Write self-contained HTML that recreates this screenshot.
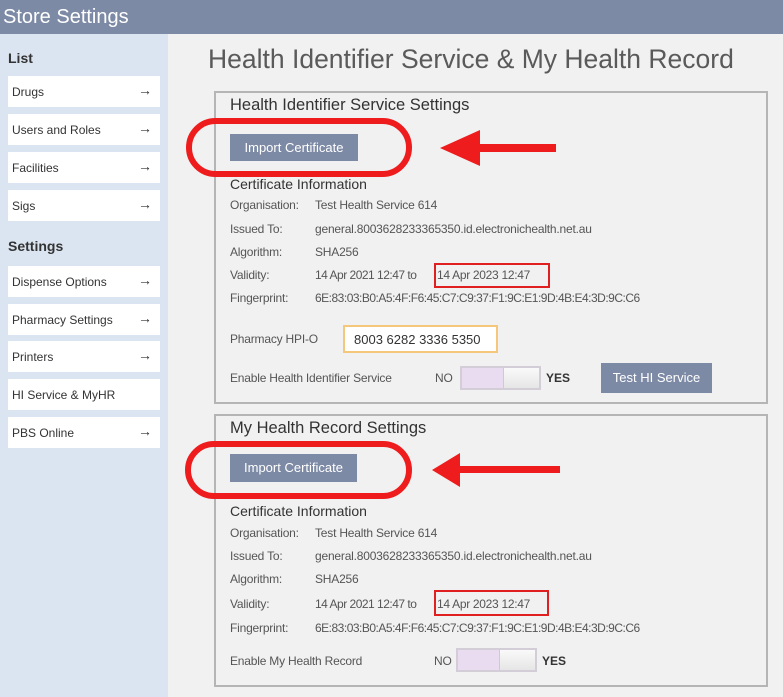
<!DOCTYPE html>
<html><head><style>
*{margin:0;padding:0;box-sizing:border-box}
body{width:783px;height:697px;overflow:hidden;background:#f1f1f1;font-family:"Liberation Sans",sans-serif;position:relative;color:#444}
.a{position:absolute;white-space:nowrap}
.tb{left:0;top:0;width:783px;height:34px;background:#7d8aa5;color:#fff;font-size:20px;padding:6px 0 0 3px}
.sb{left:0;top:34px;width:168px;height:663px;background:#dbe5f1}
.it{position:absolute;left:8px;width:152px;height:31px;background:#fff;font-size:12px;color:#333;padding:9px 0 0 4px}
.it span{position:absolute;right:8px;top:6px;font-size:14px}
.sh{font-size:14px;font-weight:bold;color:#333;left:8px}
.box{border:2px solid #b5b5b5;left:214px;width:554px}
.h2{font-size:16.5px;color:#333}
.h3{font-size:14px;color:#333}
.l{font-size:12px;color:#555;letter-spacing:-0.2px}
.btn{background:#7d8aa5;color:#fff;font-size:13px;text-align:center}
.ell{border:6px solid #ee1c1c;border-radius:30px}
.rb{border:2px solid #e02020}
.tg{background:#eadcf0;border:2px solid #d3cdd8}
.tg i{position:absolute;right:0;top:0;bottom:0;width:36px;background:linear-gradient(#fafafa,#e6e6e6);border-left:1px solid #ccc}
</style></head><body>
<div class="a tb">Store Settings</div>
<div class="a sb"></div>
<div class="a sh" style="top:50px">List</div>
<div class="it" style="top:76px">Drugs<span>→</span></div>
<div class="it" style="top:114px">Users and Roles<span>→</span></div>
<div class="it" style="top:152px">Facilities<span>→</span></div>
<div class="it" style="top:190px">Sigs<span>→</span></div>
<div class="a sh" style="top:238px">Settings</div>
<div class="it" style="top:266px">Dispense Options<span>→</span></div>
<div class="it" style="top:304px">Pharmacy Settings<span>→</span></div>
<div class="it" style="top:341px">Printers<span>→</span></div>
<div class="it" style="top:379px">HI Service &amp; MyHR</div>
<div class="it" style="top:417px">PBS Online<span>→</span></div>

<div class="a" style="left:208px;top:44px;font-size:26.5px;color:#5a5a5a">Health Identifier Service &amp; My Health Record</div>

<div class="a box" style="top:91px;height:313px"></div>
<div class="a h2" style="left:230px;top:96px">Health Identifier Service Settings</div>
<div class="a btn" style="left:230px;top:134px;width:128px;height:27px;line-height:27px">Import Certificate</div>
<div class="a ell" style="left:186px;top:118px;width:226px;height:59px"></div>
<svg class="a" style="left:438px;top:128px" width="120" height="40"><polygon points="2,20 42,2 42,16 118,16 118,24 42,24 42,38" fill="#ee1c1c"/></svg>
<div class="a h3" style="left:230px;top:176px">Certificate Information</div>
<div class="a l" style="left:230px;top:198px">Organisation:</div><div class="a l" style="left:315px;top:198px">Test Health Service 614</div>
<div class="a l" style="left:230px;top:222px">Issued To:</div><div class="a l" style="left:315px;top:222px">general.8003628233365350.id.electronichealth.net.au</div>
<div class="a l" style="left:230px;top:245px">Algorithm:</div><div class="a l" style="left:315px;top:245px">SHA256</div>
<div class="a l" style="left:230px;top:268px">Validity:</div><div class="a l" style="left:315px;top:268px;letter-spacing:-0.5px">14 Apr 2021 12:47 to</div><div class="a l" style="left:437px;top:268px;letter-spacing:-0.3px">14 Apr 2023 12:47</div>
<div class="a rb" style="left:434px;top:263px;width:116px;height:25px"></div>
<div class="a l" style="left:230px;top:291px">Fingerprint:</div><div class="a l" style="left:315px;top:291px;letter-spacing:-0.5px">6E:83:03:B0:A5:4F:F6:45:C7:C9:37:F1:9C:E1:9D:4B:E4:3D:9C:C6</div>
<div class="a l" style="left:230px;top:332px">Pharmacy HPI-O</div>
<div class="a" style="left:343px;top:325px;width:155px;height:28px;background:#fff;border:2px solid #f5c77a;font-size:13px;color:#333;padding:5px 0 0 9px">8003 6282 3336 5350</div>
<div class="a l" style="left:230px;top:371px">Enable Health Identifier Service</div>
<div class="a l" style="left:435px;top:371px">NO</div>
<div class="a tg" style="left:460px;top:366px;width:81px;height:24px"><i></i></div>
<div class="a" style="left:546px;top:371px;font-size:12px;font-weight:bold;color:#333">YES</div>
<div class="a btn" style="left:601px;top:363px;width:111px;height:30px;line-height:30px">Test HI Service</div>

<div class="a box" style="top:414px;height:273px"></div>
<div class="a h2" style="left:230px;top:419px">My Health Record Settings</div>
<div class="a btn" style="left:230px;top:454px;width:127px;height:28px;line-height:28px">Import Certificate</div>
<div class="a ell" style="left:185px;top:441px;width:227px;height:58px"></div>
<svg class="a" style="left:430px;top:451px" width="132" height="38"><polygon points="2,19 30,2 30,15 130,15 130,22 30,22 30,36" fill="#ee1c1c"/></svg>
<div class="a h3" style="left:230px;top:503px">Certificate Information</div>
<div class="a l" style="left:230px;top:526px">Organisation:</div><div class="a l" style="left:315px;top:526px">Test Health Service 614</div>
<div class="a l" style="left:230px;top:549px">Issued To:</div><div class="a l" style="left:315px;top:549px">general.8003628233365350.id.electronichealth.net.au</div>
<div class="a l" style="left:230px;top:572px">Algorithm:</div><div class="a l" style="left:315px;top:572px">SHA256</div>
<div class="a l" style="left:230px;top:597px">Validity:</div><div class="a l" style="left:315px;top:597px;letter-spacing:-0.5px">14 Apr 2021 12:47 to</div><div class="a l" style="left:437px;top:597px;letter-spacing:-0.3px">14 Apr 2023 12:47</div>
<div class="a rb" style="left:434px;top:590px;width:115px;height:26px"></div>
<div class="a l" style="left:230px;top:621px">Fingerprint:</div><div class="a l" style="left:315px;top:621px;letter-spacing:-0.5px">6E:83:03:B0:A5:4F:F6:45:C7:C9:37:F1:9C:E1:9D:4B:E4:3D:9C:C6</div>
<div class="a l" style="left:230px;top:654px">Enable My Health Record</div>
<div class="a l" style="left:434px;top:654px">NO</div>
<div class="a tg" style="left:456px;top:648px;width:81px;height:24px"><i></i></div>
<div class="a" style="left:542px;top:654px;font-size:12px;font-weight:bold;color:#333">YES</div>
</body></html>
